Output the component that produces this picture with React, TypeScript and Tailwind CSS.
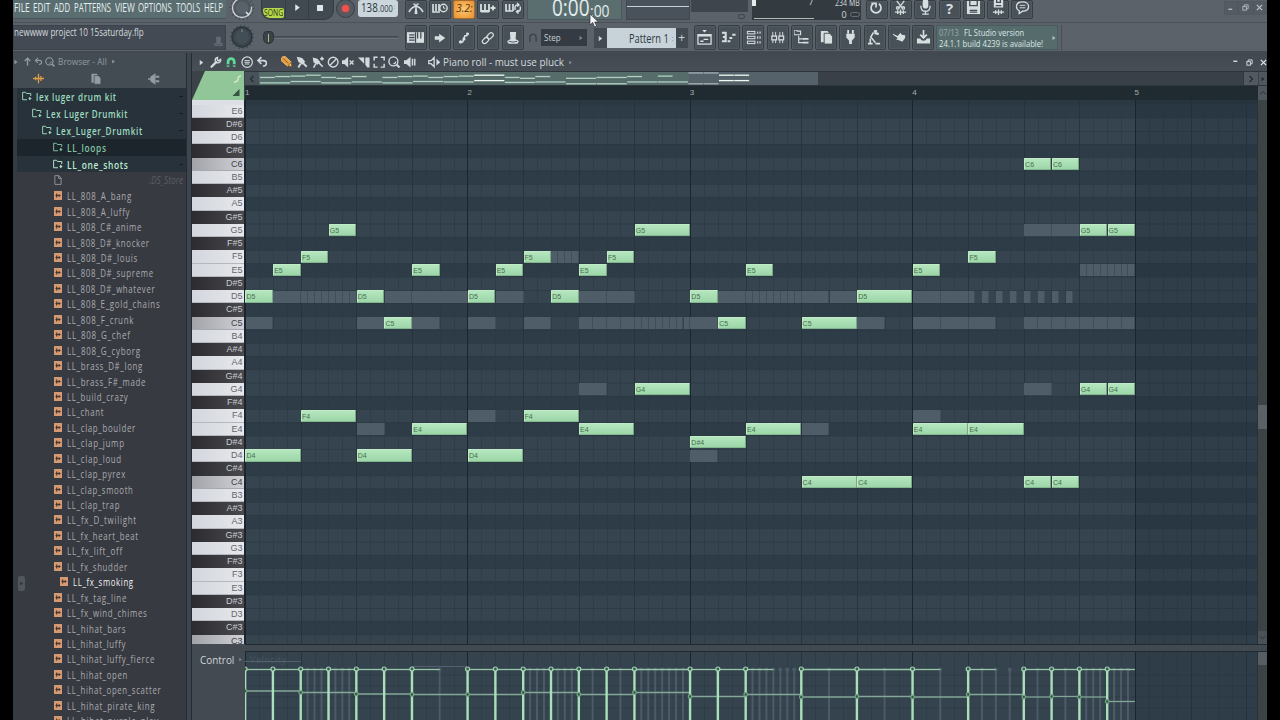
import { useLayoutEffect, useRef, useState, type ReactNode } from "react";

/* ---------- text squeezed or stretched to a known width ---------- */
function Fit({ w, children, className = "" }: { w: number; children: ReactNode; className?: string }) {
  const ref = useRef<HTMLSpanElement>(null);
  const [k, setK] = useState(1);
  useLayoutEffect(() => {
    if (ref.current) setK(w / ref.current.offsetWidth);
  }, [w]);
  return (
    <span className={`block shrink-0 whitespace-nowrap ${className}`} style={{ width: w }}>
      <span ref={ref} className="inline-block origin-left whitespace-nowrap" style={{ transform: `scaleX(${k})` }}>
        {children}
      </span>
    </span>
  );
}

/* ---------- music data ---------- */
const NAMES = ["C", "C#", "D", "D#", "E", "F", "F#", "G", "G#", "A", "A#", "B"];
const pitch = (n: string) => {
  const m = n.match(/^([A-G]#?)(\d)$/)!;
  return NAMES.indexOf(m[1]) + 12 * Number(m[2]);
};
const TOP = pitch("E6");
const ROW = 13.25;
const STEP = 27.81;
const FIRST = 4.5;

type Note = [string, number, number];
const NOTES: Note[] = [
  ["D5", 0, 1], ["E5", 1, 1], ["F5", 2, 1], ["G5", 3, 1], ["D5", 4, 1], ["C5", 5, 1], ["E5", 6, 1],
  ["D4", 0, 2], ["F4", 2, 2], ["D4", 4, 2], ["E4", 6, 2],
  ["D5", 8, 1], ["E5", 9, 1], ["F5", 10, 1], ["D5", 11, 1], ["E5", 12, 1], ["F5", 13, 1], ["G5", 14, 2],
  ["D4", 8, 2], ["F4", 10, 2], ["E4", 12, 2], ["G4", 14, 2],
  ["D5", 16, 1], ["C5", 17, 1], ["E5", 18, 1], ["C5", 20, 2], ["D5", 22, 2],
  ["D#4", 16, 2], ["E4", 18, 2], ["C4", 20, 2], ["C4", 22, 2],
  ["E5", 24, 1], ["F5", 26, 1], ["C6", 28, 1], ["C6", 29, 1], ["G5", 30, 1], ["G5", 31, 1],
  ["E4", 24, 2], ["E4", 26, 2], ["C4", 28, 1], ["C4", 29, 1], ["G4", 30, 1], ["G4", 31, 1],
];

const run = (n: string, from: number, to: number, every: number, len = every): Note[] => {
  const out: Note[] = [];
  for (let s = from; s < to - 0.01; s += every) out.push([n, s, len]);
  return out;
};
const GHOSTS: Note[] = [
  ["D5", 1, 1], ...run("D5", 2, 4, 0.25), ["D5", 5, 1], ["D5", 6, 2], ["D5", 9, 1], ["D5", 12, 1], ["D5", 13, 1],
  ["D5", 17, 1], ...run("D5", 18, 20, 0.25), ["D5", 20, 1], ["D5", 21, 1], ["D5", 24, 1], ["D5", 25, 1],
  ...run("D5", 26, 30, 0.5, 0.25),
  ["C5", 0, 1], ["C5", 4, 1], ["C5", 6, 1], ["C5", 8, 1], ["C5", 10, 1], ...run("C5", 12, 14, 0.5),
  ...run("C5", 14, 16, 0.25), ["C5", 16, 1], ["C5", 22, 1], ["C5", 24, 1], ["C5", 25, 1], ["C5", 26, 1],
  ...run("C5", 28, 32, 0.5), ...run("F5", 11, 12, 0.25), ["G4", 12, 1], ["F4", 8, 1], ["E4", 4, 1],
  ["D4", 16, 1], ["E4", 20, 1], ["F4", 24, 1], ["G4", 28, 1], ["G5", 28, 1], ["G5", 29, 1],
  ...run("E5", 30, 32, 0.25),
];

const LOWS: [number, number][] = [
  [0, 39], [2, 40.5], [4, 42], [6, 42.5], [8, 42.5], [10, 40.5], [12, 42.5], [14, 40.5], [16, 44.5], [18, 42.5],
  [20, 45], [22, 44.5], [24, 45], [26, 42.5], [28, 45], [29, 44.5], [30, 45], [31, 49.5],
];
const STEMS = [0, 1, 2, 3, 4, 5, 6, 8, 9, 10, 11, 12, 13, 14, 16, 17, 18, 20, 22, 24, 26, 28, 29, 30, 31];
const GHOST_STEMS = [
  ...run("", 2.25, 4, 0.25), ...run("", 10.25, 12, 0.25), ...run("", 14.25, 16, 0.25), ...run("", 18.25, 20, 0.25),
  ...run("", 30.25, 31, 0.25), ...run("", 31.25, 32, 0.25),
].map((n) => n[1]).concat([7, 12.5, 13.5, 21, 23, 25, 26.5, 27, 27.5, 28.5, 29.5]);

/* ---------- browser data ---------- */
const FOLDERS: [string, number, number][] = [
  ["lex luger drum kit", 22, 81], ["Lex Luger Drumkit", 32, 82], ["Lex_Luger_Drumkit", 42, 87],
  ["LL_loops", 53, 40], ["LL_one_shots", 53, 61.5],
];
const FILES: [string, number][] = [
  ["LL_808_A_bang", 65], ["LL_808_A_luffy", 63.5], ["LL_808_C#_anime", 75], ["LL_808_D#_knocker", 82.5],
  ["LL_808_D#_louis", 71], ["LL_808_D#_supreme", 86.5], ["LL_808_D#_whatever", 88], ["LL_808_E_gold_chains", 93.5],
  ["LL_808_F_crunk", 67], ["LL_808_G_chef", 63.5], ["LL_808_G_cyborg", 73.5], ["LL_brass_D#_long", 76],
  ["LL_brass_F#_made", 79], ["LL_build_crazy", 61.5], ["LL_chant", 37], ["LL_clap_boulder", 69], ["LL_clap_jump", 58],
  ["LL_clap_loud", 55], ["LL_clap_pyrex", 59], ["LL_clap_smooth", 66.5], ["LL_clap_trap", 53],
  ["LL_fx_D_twilight", 69.5], ["LL_fx_heart_beat", 72], ["LL_fx_lift_off", 55.5], ["LL_fx_shudder", 61],
  ["LL_fx_smoking", 60.5], ["LL_fx_tag_line", 60], ["LL_fx_wind_chimes", 80.5], ["LL_hihat_bars", 59],
  ["LL_hihat_luffy", 59], ["LL_hihat_luffy_fierce", 88], ["LL_hihat_open", 61], ["LL_hihat_open_scatter", 94.5],
  ["LL_hihat_pirate_king", 88], ["LL_hihat_purple_play", 92],
];

/* ---------- icons ---------- */
function Ico({ children, size = 16, className = "" }: { children: ReactNode; size?: number; className?: string }) {
  return (
    <svg
      width={size} height={size} viewBox="0 0 16 16" fill="none" stroke="currentColor" strokeWidth={1.4}
      className={`block shrink-0 ${className}`}
    >
      {children}
    </svg>
  );
}
const F = "currentColor";
const I = {
  metronome: <><path d="M1 12Q4 6.500 8 6.500T15 12" strokeWidth="1.700" /><path d="M8 2L9.500 14h-3z" fill={F} stroke="none" /><path d="M5.500 3.500L8 6l2.500-2.500" /></>,
  keysClock: <><path d="M1 4v8h7M1 4v7M4 4v7M7 4v7" strokeWidth="1.7" /><circle cx="11.5" cy="8" r="3.7" /><path d="M11.5 6v2.2h2" strokeWidth="1" /></>,
  keysPlus: <><path d="M1 4v7h8V4M5 4v7M1 11.5h8" strokeWidth="1.8" /><path d="M13 5.500v5M10.500 8h5" strokeWidth="1.8" /></>,
  keysLoop: <><path d="M1 4v7h7M4.500 4v7M8 4v7" strokeWidth="1.7" /><path d="M10 10V7.500a2.500 2.500 0 0 1 3-2.500M15.300 6.500V9a2.500 2.500 0 0 1-3 2.500M12 3l2 2-2 1.500M13.500 10l-2 1.500 2 2" /></>,
  piano: <><rect x="0" y="3" width="16" height="10" fill={F} stroke="none" /><path d="M2 5.500h5M2 8h5M2 10.500h5M10 3v6M13 3v6M8 3v10" stroke="#454d54" strokeWidth="1.200" /></>,
  arrow: <path d="M2 6h5V3l7 5-7 5v-3H2z" fill={F} stroke="none" />,
  slide: <><path d="M4 12.500h2.500L9 5.500h3" strokeWidth="1.700" /><circle cx="4" cy="12.500" r="1.900" fill={F} stroke="none" /><circle cx="8" cy="9" r="1.800" fill={F} stroke="none" /><circle cx="12" cy="3.500" r="1.700" fill={F} stroke="none" /></>,
  link: <g transform="rotate(-45 8 8)"><rect x="0" y="5.500" width="8" height="5" rx="2.500" /><rect x="7.500" y="5.500" width="8" height="5" rx="2.500" /></g>,
  hat: <><path d="M4.500 1h7l-.5 8.500q2.500.5 3.800 2.500L13 14.500H3L1.200 12Q2.500 10 5 9.500z" fill={F} stroke="none" /><path d="M3 11.800q5 1.700 10 0" stroke="#454d54" strokeWidth="1" /></>,
  playlist: <><path d="M5.500 0h5L8 2.600z" fill={F} stroke="none" /><rect x="1" y="5" width="14" height="10" /><path d="M1 6h14" strokeWidth="2" /><path d="M3.500 12h3.500M7 10h5" /></>,
  steps: <path d="M1 3h4v9H1M2 7.500h3M7 12h3M9 8.500h3M12 5h3.500" strokeWidth="2.200" />,
  rack: <><rect x="1.500" y="1.500" width="8" height="2.600" strokeWidth="1.100" /><rect x="1.500" y="6.700" width="8" height="2.600" strokeWidth="1.100" /><rect x="1.500" y="11.900" width="8" height="2.600" strokeWidth="1.100" /><path d="M12.500 1.500v2.600M12.500 6.700v2.600M12.500 11.900v2.600M15 1.500v2.600M15 6.700v2.600M15 11.900v2.600" strokeWidth="1.200" /></>,
  mixer: <><path d="M3 2v12M6 2v12M10.500 2v12M13.500 2v12" strokeWidth="1" /><rect x="2" y="6.500" width="5" height="4" fill="#454d54" /><rect x="9.500" y="6.500" width="5" height="4" fill="#454d54" /></>,
  tree: <><path d="M0 0h2.500l1 1.200H7V5H0z" strokeWidth="1.200" /><path d="M5 6.500v7h5M5 9.500h5" strokeWidth="1.200" /><path d="M9.500 9.500h6M9.500 13.500h6" strokeWidth="2" /></>,
  doc: <><path d="M2 1h7l1.500 2v10H2z" fill={F} stroke="none" /><path d="M5.500 3.500h6L14.500 7v8H5.500z" fill={F} stroke="#454d54" strokeWidth="1" /></>,
  plug: <><path d="M3.500 4h9v4l-3 3.500V15h-3v-3.500l-3-3.500z" fill={F} stroke="none" /><path d="M5.500 0v4M10.500 0v4" strokeWidth="2" /></>,
  robot: <><path d="M7 2.500L4 7.500l5 6" strokeWidth="1.600" /><path d="M7.500 2l3-1.500M8 3l4.500 1.500" strokeWidth="2.600" /><path d="M1 14.500h5M9 14.500h5M3.500 9v5" strokeWidth="1.700" /></>,
  hand: <path d="M1 4l5 2.500L9 3l1.500 2 3.500.5v3L11 12.500 7.500 11l-3-.5 1.500-2L1 5z" fill={F} stroke="none" />,
  download: <><path d="M8 0v7M4.500 5L8 8.500 11.500 5" strokeWidth="1.800" /><path d="M1 9h3.500q1 2.500 3.500 2.500T11.500 9H15v5.500H1z" fill={F} stroke="none" /></>,
  undo: <><path d="M4.500 4a5.300 5.300 0 1 0 6 0" strokeWidth="1.800" /><path d="M2.500 3.500h5V8" strokeWidth="1.800" /></>,
  cut: <><path d="M4 1l6 8M12 1L6 9" /><path d="M2 13h12M5 11v4M8 10v6M11 11v4" /><circle cx="5" cy="8.500" r="1.300" /><circle cx="11" cy="8.500" r="1.300" /></>,
  mic: <><rect x="5" y="-1" width="6" height="10" rx="3" fill={F} stroke="none" /><path d="M3 6q0 6 5 6t5-6M8 12v3M4.500 15h7" /></>,
  save: <><path d="M1 1h14v14H1z" fill={F} stroke="none" /><path d="M4 1v5h8V1M4 11h8M4 13h8" stroke="#454d54" /></>,
  saveWave: <><path d="M3 0h10v8H3z" fill={F} stroke="none" /><path d="M6 0v2.500h4V0M5 6h6" stroke="#454d54" /><path d="M2 13h12M5 11v4M8 10v6M11 11v4" /></>,
  chat: <><path d="M8 2c4 0 6.500 2 6.500 5S12 12 8 12l-3.500 2.500V11.500Q1.500 10 1.500 7C1.500 4 4 2 8 2z" /><path d="M5 5.700h6M5 8.300h6" strokeWidth="1" /></>,
  wrench: <><path d="M2 14l6-6" strokeWidth="3" strokeLinecap="round" /><path d="M13.800 4.500A3.600 3.600 0 1 1 9.800 1.800L9.500 5l1.500 1.300z" strokeWidth="1.800" /></>,
  magnet: <><path d="M4 14V7.500a4 4 0 0 1 8 0V14" strokeWidth="3.600" /><path d="M2 11.500h4M10 11.500h4" stroke="#434a52" /></>,
  stamp: <><circle cx="8" cy="8" r="6.800" strokeWidth="1.600" /><path d="M4.500 6h7M4.500 8.200h7M5 10.400h6" strokeWidth="1.300" /></>,
  back: <><path d="M4 6h6a3 3 0 0 1 0 7H9" strokeWidth="2" /><path d="M7 1.500L2.500 6 7 10.500" strokeWidth="2" /></>,
  pencil: <g transform="rotate(42 8 8)"><rect x="-1" y="4.300" width="13" height="7.400" rx="1" fill="#e5a043" stroke="#ffd08a" strokeWidth=".8" /><path d="M12 5l4.500 3-4.500 3zM1 8h9" stroke="#7a4e10" strokeWidth=".9" fill="#f5c77f" /></g>,
  brush: <><path d="M1 1l7 1.500 4 5-4 4-5-4z" fill={F} stroke="none" /><path d="M8 8l6 6M3 15l3-5" strokeWidth="2.400" /></>,
  brushPlus: <><path d="M1 2l6 1.500 4 4.500-4 3.500-5-3z" fill={F} stroke="none" /><path d="M9 9l5 5M2 15l3-5M13 1v5M10.500 3.500h5" strokeWidth="2" /></>,
  no: <><circle cx="8" cy="8" r="6.300" strokeWidth="1.800" /><path d="M4 12l8-8" strokeWidth="1.800" /></>,
  mute: <><path d="M0 5.500h3l5-4.500v14L3 10.500H0z" fill={F} stroke="none" /><path d="M10 6l5 5M15 6l-5 5" strokeWidth="1.800" /></>,
  slice: <><path d="M0 2h8v8z" fill={F} stroke="none" /><path d="M9.500 2H15v13h-3l-2.500-4z" fill={F} stroke="none" /></>,
  select: <path d="M1.500 6V1.500H6M10 1.500h4.500V6M14.500 10v4.500H10M6 14.500H1.500V10" strokeWidth="1.900" />,
  zoom: <><circle cx="7" cy="7" r="5.800" strokeWidth="1.800" /><path d="M11 11l4 4" strokeWidth="2.600" /><path d="M7 10a3 3 0 0 0 3-3" strokeWidth="1.500" /></>,
  speaker: <><path d="M0 5.500h3L8.500 1v14L3 10.500H0z" fill={F} stroke="none" /><path d="M11 3.500v9M14 3.500v9" strokeWidth="1.900" /></>,
  pianoIcon: <><path d="M1 6h3l4-4v12L4 10H1z" strokeWidth="1.700" /><path d="M11 3.500l5 4.500-5 4.500z" fill={F} stroke="none" /></>,
  min: <path d="M3 12h9" strokeWidth="3" />,
  restore: <><path d="M5 5V2h9v9h-3" strokeWidth="2" /><rect x="2" y="6" width="8" height="8" strokeWidth="2" /></>,
  close: <path d="M2 2l12 12M14 2L2 14" strokeWidth="3" />,
  tri: <path d="M4 2l8 6-8 6z" fill={F} stroke="none" />,
  folder: <><path d="M14 8V4H7L5.500 2H1v12h7" strokeWidth="1.500" /><path d="M10 12h4M12 9.500l2.500 2.500-2.500 2.500z" fill={F} strokeWidth="1" /></>,
  file: <path d="M3 1h6.500L13 5v10H3zM9 1v4.500h4" strokeWidth="1.500" />,
  wave: <path d="M0 8h16M4 5.500v5M8 1v14M11.500 4.500v7" strokeWidth="1.900" />,
  plugSide: <><path d="M0 8h4M4 5.500L9 2v12L4 10.500z" fill={F} strokeWidth="1.800" /><path d="M10 5h5M10 11h5" strokeWidth="2.400" /></>,
};

function Btn({ icon, hot = false }: { icon: ReactNode; hot?: boolean }) {
  return (
    <div
      className={
        hot
          ? "flex h-full w-[22px] shrink-0 items-center justify-center rounded-[2px] border border-[#a36c2c] bg-[radial-gradient(circle,#ffc86e,#e88f31)] text-[#4c3210]"
          : "flex h-full w-[22px] shrink-0 items-center justify-center rounded-[2px] border border-[#363d43] bg-[#485058] text-[#d6dee0] shadow-[inset_0_0_2px_#697179]"
      }
    >
      {icon}
    </div>
  );
}

function Knob({ size, dark = false }: { size: number; dark?: boolean }) {
  return (
    <svg width={26} height={26} viewBox="-13 -13 26 26" className="block shrink-0">
      <circle r="11.500" fill="none" stroke="#3d454b" strokeWidth="1.500" strokeDasharray="1 3" />
      <circle r={size} fill={dark ? "#39444c" : "#4d565d"} stroke={dark ? "#2b343b" : "#cdd5d6"} strokeWidth="1.300" strokeDasharray={dark ? undefined : "46 12"} />
      <circle r={size - 3} fill={dark ? "#424d55" : "#59626a"} />
      {dark ? <path d="M0-8v3" stroke="#7e8a90" /> : <path d="M4 4l3 3" stroke="#e4eaea" strokeWidth="1.500" />}
    </svg>
  );
}

function TopBar() {
  const row1 = [I.undo, I.cut, I.mic, null, I.save, I.saveWave, I.chat];
  const row2 = [I.playlist, I.steps, I.rack, I.mixer, I.tree, I.doc, I.plug, I.robot, I.hand, I.download];
  return (
    <header className="h-[53px] shrink-0 bg-[#5b6269]">
      {/* upper row */}
      <div className="flex h-[23px] items-start border-b border-[#4a5158]">
        <div className="flex h-[19px] w-[213px] shrink-0 items-start gap-[3.800px] border-b border-[#46565a] bg-[#5a6e71] pl-px text-[12.500px] leading-[15px] text-[#e6efef]">
          {([["FILE", 15.5], ["EDIT", 17], ["ADD", 16], ["PATTERNS", 37], ["VIEW", 19.5], ["OPTIONS", 34], ["TOOLS", 24.5], ["HELP", 19]] as [string, number][]).map(
            ([t, w]) => <Fit key={t} w={w}>{t}</Fit>,
          )}
        </div>
        <div className="-mt-[5px] ml-[3px]"><Knob size={9.5} /></div>
        <div className="ml-[6px] flex h-[20px] w-[73px] shrink-0 items-start rounded-b-[10px] border border-t-0 border-[#343b41] bg-[#424a51] text-[#e1e7e8]">
          <div className="ml-[1px] mt-[8px] flex h-[10px] w-[21px] items-center justify-center rounded-[2px] rounded-bl-[7px] bg-[#b6d84b] text-[#2e3a12]">
            <Fit w={19} className="text-[9px] leading-[10px]">SONG</Fit>
          </div>
          <div className="ml-px flex h-[19px] w-[24px] items-start justify-center border-x border-[#363d43] pt-[3px]"><Ico size={9}>{I.tri}</Ico></div>
          <div className="ml-[8px] mt-[5px] h-[6px] w-[6px] bg-[#e1e7e8]" />
        </div>
        <div className="ml-[2px] -mt-px flex h-[19px] w-[19px] shrink-0 items-center justify-center rounded-full border border-[#383f45] bg-[#525a61]">
          <div className="h-[7px] w-[7px] rounded-full bg-[#f0524c] shadow-[0_0_3px_#d04a45]" />
        </div>
        <div className="ml-[3px] flex h-[17px] w-[40px] shrink-0 items-start rounded-[3px] bg-[#cad6dc] pl-[3px] text-[#2c373d]">
          <Fit w={16.500} className="text-[13px] leading-[15px]">138</Fit>
          <Fit w={15} className="pt-px text-[9px] leading-[16px]">.000</Fit>
          <span className="ml-px text-[6px] leading-[15px] text-[#7d888e]">:</span>
        </div>
        <div className="ml-[6.500px] flex h-[19px] shrink-0 gap-[2.300px]">
          <Btn icon={<Ico className="-mt-[3px]">{I.metronome}</Ico>} />
          <Btn icon={<Ico className="-mt-[3px]">{I.keysClock}</Ico>} />
          <Btn hot icon={<Fit w={17} className="-mt-[4px] text-[11px] italic leading-[12px]">3.2:</Fit>} />
          <Btn icon={<Ico className="-mt-[3px]">{I.keysPlus}</Ico>} />
          <Btn icon={<Ico className="-mt-[3px]">{I.keysLoop}</Ico>} />
        </div>
        <div className="ml-[3px] flex h-[20px] w-[95px] shrink-0 items-start border border-t-0 border-[#4a585b] bg-[#5a6e70] pl-[24px] text-[#e3ecec]">
          <Fit w={38} className="-mt-[6px] text-[23px] leading-[26px]">0:00</Fit>
          <Fit w={20} className="-mt-[2px] text-[16px] leading-[26px]">:00</Fit>
        </div>
        <div className="ml-[4px] h-[20px] w-[64px] shrink-0 border border-t-0 border-[#40474e] bg-[#49515a] pt-[6px]">
          <div className="h-px bg-[#c8ced1]" />
        </div>
        <div className="ml-[1px] flex h-[20px] w-[57px] shrink-0 flex-col items-end">
          <div className="h-[12px] w-full bg-[#3e454c]" />
          <div className="mr-[3px] mt-[2px] h-[5px] w-[7px] rounded-full border border-[#394147]" />
        </div>
        <div className="ml-[4px] flex h-[20px] w-[109px] shrink-0 items-start bg-[#333b41] text-[9px] leading-[10px] text-[#d2d9dc]">
          <div className="flex h-[19px] w-[62px] flex-col justify-between">
            <div className="flex justify-between"><span className="h-[6px] w-[4px] bg-[#e5eaeb]" /><span className="-mt-[3px]">7</span></div>
            <div className="ml-[2px] h-px bg-[#aeb9ba]" />
          </div>
          <div className="flex w-[46px] flex-col items-end">
            <Fit w={25} className="-mt-[3px] leading-[12px]">234 MB</Fit>
            <span className="flex items-center gap-[3px] leading-[11px]">0<i className="block h-[5px] w-[10px] rounded-full border border-[#65717a]" /></span>
          </div>
        </div>
        <div className="ml-[5px] flex h-[19px] shrink-0 gap-[2.300px]">
          {row1.map((ic, i) => (
            <Btn key={i} icon={ic ? <Ico size={15} className="-mt-[4px]">{ic}</Ico> : <span className="-mt-[4px] text-[15px] font-bold leading-[16px]">?</span>} />
          ))}
        </div>
        <div className="ml-auto flex h-[15px] items-center text-[#b8c1c6]">
          {[I.min, I.restore, I.close].map((ic, i) => (
            <div key={i} className="flex h-[14px] w-[14.500px] items-center justify-center border border-[#51585f] bg-[#545b62]"><Ico size={7}>{ic}</Ico></div>
          ))}
        </div>
      </div>
      {/* lower row */}
      <div className="flex h-[30px] items-start border-b-2 border-[#42494f] pt-[2px]">
        <div className="flex h-[25px] w-[213px] shrink-0 justify-between border border-[#3c434a] bg-[#434a53] text-[#d4dbdf]">
          <Fit w={130} className="text-[10px] leading-[12px]">newwww project 10 15saturday.flp</Fit>
          <Ico size={11} className="mr-px mt-[10px] text-[#626b73]">{I.hat}</Ico>
        </div>
        <div className="-mt-px ml-[3px]"><Knob size={10} dark /></div>
        <div className="ml-[8px] flex h-[25px] w-[135px] shrink-0 items-center">
          <div className="h-[13px] w-[11px] shrink-0 rounded-[5px] rounded-b-[7px] border border-[#2d3439] bg-[#3c4347] px-[4px] pt-[2px]"><div className="h-[8px] w-px bg-[#b6b886]" /></div>
          <div className="h-[3px] flex-1 border-y border-t-[#42494f] border-b-[#697077] bg-[#50575e]" />
        </div>
        <div className="ml-[6.500px] flex h-[25px] shrink-0 gap-[2.300px]">
          {[I.piano, I.arrow, I.slide, I.link, I.hat].map((ic, i) => <Btn key={i} icon={<Ico size={i === 0 ? 17 : 14}>{ic}</Ico>} />)}
        </div>
        <div className="ml-[4px] mt-[8px] text-[#3e464d]"><Ico size={10}><path d="M3 14V7a5 5 0 0 1 10 0v7" strokeWidth="2.500" /></Ico></div>
        <div className="ml-[3px] mt-[4px] flex h-[17px] w-[46px] shrink-0 items-center justify-between bg-[#343b42] px-[3px] text-[9px] text-[#c9d1d5]">
          <Fit w={17} className="leading-[12px]">Step</Fit><Ico size={6} className="text-[#7b858c]">{I.tri}</Ico>
        </div>
        <div className="ml-[7px] mt-[3px] flex h-[20px] w-[95px] shrink-0 items-stretch text-[#cbd3d6]">
          <div className="flex w-[13px] items-center justify-center bg-[#434a51]"><Ico size={7}>{I.tri}</Ico></div>
          <div className="flex w-[69px] items-center justify-end bg-[#c7d3d9] text-[#2e3a40]">
            <Fit w={40} className="text-[13px] leading-[18px]">Pattern 1</Fit><span className="ml-[3px] mr-[2px] text-[8px] text-[#7d898f]">:</span>
          </div>
          <div className="flex w-[12px] items-center justify-center bg-[#434a51] text-[12px]">+</div>
        </div>
        <div className="ml-[5px] flex h-[25px] shrink-0 gap-[2.300px]">
          {row2.map((ic, i) => <Btn key={i} icon={<Ico size={15}>{ic}</Ico>} />)}
        </div>
        <div className="ml-[2px] flex h-[25px] w-[122px] shrink-0 items-center border border-[#4a5b5d] bg-[#566b6c] pl-[2px] text-[9px] leading-[11px] text-[#dbe7e4]">
          <div className="w-[112px]">
            <div className="flex gap-[5px]"><Fit w={20} className="text-[#9caaad]">07/13</Fit><Fit w={60.500}>FL Studio version</Fit></div>
            <Fit w={104}>24.1.1 build 4239 is available!</Fit>
          </div>
          <Ico size={6} className="text-[#b2bebe]">{I.tri}</Ico>
        </div>
        <div className="ml-[3px] h-[27px] w-px bg-[#474e55]" />
      </div>
    </header>
  );
}

function Browser() {
  return (
    <aside className="flex w-[173px] shrink-0 flex-col overflow-hidden bg-[#383a41]">
      <div className="h-[35px] shrink-0 bg-[#434b53] text-[#939ca3]">
        <div className="flex h-[17px] items-center text-[9px]">
          <Ico size={6}>{I.tri}</Ico>
          <Ico size={9} className="ml-[4px]"><path d="M8 15V3M3 7l5-5 5 5" strokeWidth="2.500" /></Ico>
          <Ico size={9} className="ml-[2px]">{I.back}</Ico>
          <Ico size={10} className="ml-[2px]">{I.zoom}</Ico>
          <Fit w={49} className="ml-[3px] leading-[12px]">Browser - All</Fit>
          <Ico size={5} className="ml-[4px]">{I.tri}</Ico>
        </div>
        <div className="flex h-[17px] items-center pl-[20px]">
          <Ico size={11} className="text-[#dc9d48]">{I.wave}</Ico>
          <Ico size={12} className="ml-[46px]">{I.doc}</Ico>
          <Ico size={12} className="ml-[46px]">{I.plugSide}</Ico>
        </div>
      </div>
      <div className="flex min-h-0 flex-1">
        <div className="w-[4px] shrink-0 bg-[#343b42]" />
        <div className="min-w-0 flex-1">
          {FOLDERS.map(([t, x, w], i) => (
            <div key={t} className={`flex h-[16.900px] items-center justify-between pr-[3px] ${i === 3 ? "bg-[#1c252c]" : "bg-[#27323a]"} ${i === 3 ? "text-[#83c3a0]" : i === 4 ? "text-[#bcebd3]" : "text-[#9fdcc0]"}`}>
              <div className="flex items-center" style={{ paddingLeft: x - 17 }}>
                <Ico size={10}>{I.folder}</Ico>
                <Fit w={w} className="ml-[4px] text-[11.500px] font-semibold leading-[15px] tracking-[0.900px]">{t}</Fit>
              </div>
              {i !== 3 && <span className="h-px w-[4px] bg-[#141c22]" />}
            </div>
          ))}
          <div className="flex h-[15.600px] items-center justify-between pl-[36px] pr-[3px] text-[#8f959b]">
            <Ico size={10}>{I.file}</Ico>
            <Fit w={34} className="text-[10px] italic leading-[12px] text-[#5a5d64]">.DS_Store</Fit>
          </div>
          {FILES.map(([t, w]) => {
            const on = t === "LL_fx_smoking";
            return (
              <div key={t} className={`flex h-[15.450px] items-center ${on ? "pl-[43px] text-[#f1f2f2]" : "pl-[37px] text-[#a9abaf]"}`}>
                <svg width="8" height="9" viewBox="0 0 8 9" className="block shrink-0">
                  <rect width="8" height="9" fill="#d59a74" />
                  <path d="M1.500 4.500h5M2.700 2.500v4M5.200 3.200v2.600" stroke="#44332c" strokeWidth="1.200" />
                </svg>
                <Fit w={w} className="ml-[5px] text-[11.500px] leading-[15px] tracking-[1px]">{t}</Fit>
              </div>
            );
          })}
        </div>
      </div>
    </aside>
  );
}

function Minimap() {
  const c6 = pitch("C6");
  return (
    <div className="flex h-[15px] shrink-0 border-y border-[#2e353b] bg-[#3a4047] text-[#252c31]">
      <div className="flex w-[14px] items-center justify-center bg-[#48525a]"><Ico size={8}><path d="M11 2L5 8l6 6" strokeWidth="2.500" /></Ico></div>
      <svg width="559" height="13" className="block bg-[#556269]">
        <rect width="430" height="13" fill="#566c6b" />
        {NOTES.map(([n, s, l], i) => (
          <rect key={i} x={1 + s * 15.300} y={0.300 + (c6 - pitch(n)) * 0.450} width={l * 15.300 - 0.500} height="1.300"
            fill={s === 14 || s >= 30 ? "#eefaf2" : s >= 28 ? "#a2aeb4" : "#b0cfc0"} />
        ))}
      </svg>
      <div className="flex-1" />
      <div className="flex w-[15px] items-center justify-center border-l border-[#30373d] bg-[#525960]"><Ico size={8}><path d="M5 2l6 6-6 6" strokeWidth="2.500" /></Ico></div>
      <div className="flex w-[9px] items-center justify-center border-l border-[#3a4147] bg-[#50575e]"><Ico size={6}>{I.tri}</Ico></div>
    </div>
  );
}

function GridLines({ h }: { h: number }) {
  return (
    <g shapeRendering="crispEdges">
      {Array.from({ length: 73 }, (_, i) => {
        const bar = i % 16 === 0;
        const beat = i % 4 === 0;
        return <rect key={i} x={Math.round((i * STEP) / 2)} y="0" width="1" height={h} fill={bar ? "#1a262e" : beat ? "#24323b" : "#2a3842"} opacity={bar ? 1 : beat ? 0.85 : 0.55} />;
      })}
    </g>
  );
}

function Keys() {
  return (
    <div className="w-[53px] shrink-0 overflow-hidden border-r border-[#1d2429] bg-[#dcdfe5] pt-[4.500px]">
      {Array.from({ length: 41 }, (_, i) => {
        const p = TOP - i;
        const name = NAMES[p % 12];
        const black = name.includes("#");
        return (
          <div
            key={i}
            className={`h-[13.250px] pr-[1.500px] text-right font-['Liberation_Sans',sans-serif] text-[9px] leading-[13px] ${
              black
                ? "bg-linear-to-r from-[#2c2c30] to-[#49494e] text-[#cbccd0]"
                : name === "C"
                  ? "border-b border-[#a6a9b0] bg-linear-to-r from-[#a1a3a8] to-[#cfd1d6] text-[#3f4147]"
                  : "border-b border-[#b4b7be] bg-linear-to-r from-[#d3d6dd] to-[#e6e8ec] text-[#64676d]"
            }`}
          >
            {name}{Math.floor(p / 12)}
          </div>
        );
      })}
    </div>
  );
}

function Roll() {
  return (
    <div className="relative w-[1012px] shrink-0 overflow-hidden bg-[#33424d]">
      <svg width="1012" height="545" className="block">
        {Array.from({ length: 42 }, (_, i) => {
          const dark = ["E", "C#", "B", "A", "F#"].includes(NAMES[(TOP - i) % 12]);
          return (
            <g key={i}>
              <rect x="0" y={FIRST + i * ROW} width="1012" height={ROW} fill={dark ? "#2e3c47" : "#35444e"} />
              <rect x="0" y={FIRST + i * ROW} width="1012" height=".6" fill="#2a3741" />
            </g>
          );
        })}
        <rect width="1012" height="4" fill="#2b3841" />
        <GridLines h={545} />
        <rect x="890" width="122" height="545" fill="#1b2b38" opacity=".22" />
      </svg>
      {GHOSTS.map(([n, s, l], i) => (
        <div key={`g${i}`} className="absolute h-[12px] border-r border-[#404e59] bg-[#4e5d68]"
          style={{ left: s * STEP + 0.5, top: FIRST + 0.5 + (TOP - pitch(n)) * ROW, width: l * STEP }} />
      ))}
      {NOTES.map(([n, s, l], i) => (
        <div key={i}
          className="absolute h-[12.300px] rounded-[1px] border border-t-[#c0eac8] border-r-[#7ca688] border-b-[#83b58e] border-l-[#c0eac8] bg-linear-to-b from-[#b4e6bd] to-[#9dd6a9] font-['Liberation_Sans',sans-serif] text-[7px] leading-[11px] text-[#48704f]"
          style={{ left: s * STEP + 0.4, top: FIRST + 0.4 + (TOP - pitch(n)) * ROW, width: l * STEP - 0.4 }}>
          {n}
        </div>
      ))}
    </div>
  );
}

function Velocity() {
  return (
    <svg width="1012" height="68" className="block shrink-0 bg-[#34434e]">
      <path d="M0 23H1012M0 34H1012M0 45H1012M0 56H1012" stroke="#2c3a44" strokeWidth=".8" />
      <GridLines h={68} />
      <rect x="890" width="122" height="68" fill="#1b2b38" opacity=".22" />
      <text x="5" y="11" fontSize="9" fill="#485762" textLength="36">Velocity</text>
      <path d="M0 9.500H56M167 14.500H222" stroke="#52616b" />
      {GHOST_STEMS.map((s, i) => (
        <g key={i} fill="#4c5b66">
          <rect x={s * STEP - 1} y="18" width="2" height="52" />
          <circle cx={s * STEP} cy="17.500" r="2" />
        </g>
      ))}
      <g stroke="#98c5a8" strokeWidth="1.300">
        {NOTES.filter((n) => pitch(n[0]) >= pitch("C5")).map(([, s, l], i) => (
          <path key={i} d={`M${s * STEP} 17.500h${l * STEP}`} />
        ))}
        {LOWS.map(([s, y], i) => {
          const e = i + 1 < LOWS.length ? LOWS[i + 1][0] : 32;
          return <path key={s} d={`M${s * STEP} ${y}H${e * STEP}`} stroke="#83a897" />;
        })}
      </g>
      {STEMS.map((s) => (
        <g key={s}>
          <rect x={s * STEP - 1.1} y="17" width="2.400" height="52" fill="#a9dfb9" />
          <circle cx={s * STEP + 0.1} cy="17" r="2" fill="#3d5a54" stroke="#a0d4b0" strokeWidth="1.200" />
        </g>
      ))}
      {LOWS.map(([s, y]) => <circle key={s} cx={s * STEP + 0.1} cy={y} r="1.800" fill="#34584a" stroke="#75a583" strokeWidth="1.200" />)}
    </svg>
  );
}

function PianoRoll() {
  const tools: [ReactNode, string][] = [
    [I.wrench, "ml-[5px]"], [I.magnet, "ml-[3px] text-[#5fdb9a]"], [I.stamp, "ml-[3px]"], [I.back, "ml-[3px]"],
    [I.pencil, "ml-[13px]"], [I.brush, "ml-[3px]"], [I.brushPlus, "ml-[3px]"], [I.no, "ml-[3px]"], [I.mute, "ml-[3px]"],
    [I.slice, "ml-[3px]"], [I.select, "ml-[3px]"], [I.zoom, "ml-[3px]"], [I.speaker, "ml-[3px]"], [I.pianoIcon, "ml-[12px]"],
  ];
  return (
    <main className="flex min-w-0 flex-1 flex-col overflow-hidden bg-[#434a52]">
      <div className="flex h-[18px] shrink-0 items-center bg-linear-to-b from-[#414850] to-[#474e56] pl-[6px] text-[#d3dadd]">
        <Ico size={7}>{I.tri}</Ico>
        {tools.map(([ic, c], i) => <Ico key={i} size={12.3} className={c}>{ic}</Ico>)}
        <Fit w={121} className="ml-[3px] text-[11px] leading-[16px]">Piano roll - must use pluck</Fit>
        <Ico size={5} className="ml-[4px] text-[#899299]">{I.tri}</Ico>
        <div className="ml-auto flex items-center gap-[7px] text-[#dfe5e7]">
          <Ico size={7} className="-mt-[5px]">{I.min}</Ico><Ico size={7}>{I.restore}</Ico><Ico size={7}>{I.close}</Ico>
        </div>
      </div>
      <div className="flex h-[29px] shrink-0">
        <svg width="53" height="29" className="block shrink-0 bg-[#3b4248]">
          <path d="M13 0H52V29H0z" fill="#91c698" />
          <path d="M42 11q4 0 4-3t3-3" stroke="#cfe9cf" strokeWidth="1.500" fill="none" />
          <path d="M47.500 18v7h-7z" fill="#35553f" />
        </svg>
        <div className="flex min-w-0 flex-1 flex-col">
          <Minimap />
          <div className="flex flex-1">
            <div className="flex flex-1 bg-[#202b31] font-['Liberation_Sans',sans-serif] text-[8px] leading-[14px] text-[#a2adb1]">
              {[1, 2, 3, 4, 5].map((n) => <span key={n} className="w-[222.400px] shrink-0 last:w-auto">{n}</span>)}
            </div>
            <div className="flex w-[9px] items-center justify-center bg-[#51585d] text-[#2a3136]"><Ico size={8}><path d="M2 11l6-6 6 6" strokeWidth="2" /></Ico></div>
          </div>
        </div>
      </div>
      <div className="flex h-[544px] shrink-0">
        <Keys />
        <Roll />
        <div className="flex flex-1 flex-col justify-between border-l border-[#2a3136] bg-[#3b4345]">
          <div className="mt-[305px] h-[24px] bg-[#5a6267]" />
          <div className="flex h-[13px] items-center justify-center bg-[#4b5257] text-[#283036]"><Ico size={7}><path d="M2 5l6 6 6-6" strokeWidth="2" /></Ico></div>
        </div>
      </div>
      <div className="flex min-h-0 flex-1">
        <div className="flex h-[31px] w-[53px] shrink-0 items-center pl-[8px] text-[10.500px] text-[#ced5d8]">
          <Fit w={34} className="leading-[14px]">Control</Fit><Ico size={5} className="ml-[4px] text-[#7e878d]">{I.tri}</Ico>
        </div>
        <div className="flex min-w-0 flex-1 flex-col">
          <div className="h-[8px] shrink-0 border-y border-[#222a30] bg-[#424a51]" />
          <div className="flex min-h-0 flex-1">
            <Velocity />
            <div className="flex-1 border-l border-[#2a3136] bg-[#3b4345]"><div className="h-[13px] bg-[#565e63]" /></div>
          </div>
        </div>
      </div>
    </main>
  );
}

export default function App() {
  return (
    <div className="relative h-[720px] w-[1280px] overflow-hidden bg-black px-[13px] font-['Open_Sans','Noto_Sans',sans-serif]">
      <div className="flex h-full flex-col">
        <TopBar />
        <div className="flex min-h-0 flex-1">
          <Browser />
          <div className="w-[6px] shrink-0 border-x border-[#252c33] bg-[#3d464e]" />
          <PianoRoll />
        </div>
      </div>
      <div className="absolute left-[18px] top-[576px] flex h-[15px] w-[7px] items-center justify-center rounded-[2px] bg-[#51555c] text-[#2b2f35]"><Ico size={5}>{I.tri}</Ico></div>
      <svg width="12" height="16" viewBox="0 0 12 16" className="absolute left-[589px] top-[13px]">
        <path d="M1 1v11l2.800-2.500L5.500 14l2.200-1-2-4H9.500z" fill="#f4f6f7" stroke="#2a3136" strokeWidth=".7" />
      </svg>
    </div>
  );
}
